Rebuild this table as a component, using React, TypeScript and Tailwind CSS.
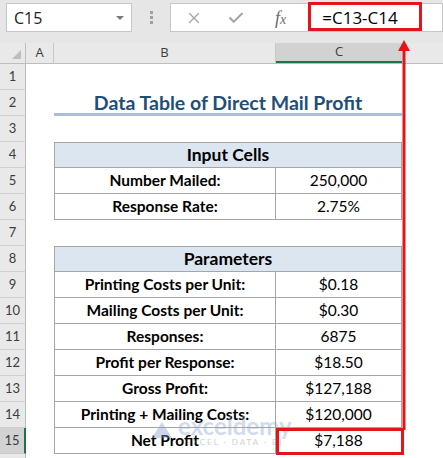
import { Check, X } from "lucide-react";

type Row = { n: number; kind: "blank" | "title" | "head" | "data"; label?: string; value?: string };

const rows: Row[] = [
  { n: 1, kind: "blank" },
  { n: 2, kind: "title", label: "Data Table of Direct Mail Profit" },
  { n: 3, kind: "blank" },
  { n: 4, kind: "head", label: "Input Cells" },
  { n: 5, kind: "data", label: "Number Mailed:", value: "250,000" },
  { n: 6, kind: "data", label: "Response Rate:", value: "2.75%" },
  { n: 7, kind: "blank" },
  { n: 8, kind: "head", label: "Parameters" },
  { n: 9, kind: "data", label: "Printing Costs per Unit:", value: "$0.18" },
  { n: 10, kind: "data", label: "Mailing Costs per Unit:", value: "$0.30" },
  { n: 11, kind: "data", label: "Responses:", value: "6875" },
  { n: 12, kind: "data", label: "Profit per Response:", value: "$18.50" },
  { n: 13, kind: "data", label: "Gross Profit:", value: "$127,188" },
  { n: 14, kind: "data", label: "Printing + Mailing Costs:", value: "$120,000" },
  { n: 15, kind: "data", label: "Net Profit", value: "$7,188" },
];

function RowHeader({ n }: { n: number }) {
  const active = n === 15;
  return (
    <div
      className={
        active
          ? "w-[26px] shrink-0 flex items-center justify-center bg-[#d2d2d2] border-b border-[#c8c8c8] border-r-2 border-r-[#217346] text-[13px] text-[#3c3c3c]"
          : "w-[26px] shrink-0 flex items-center justify-center bg-[#e9e9e9] border-b border-[#d0d0d0] border-r border-r-[#bdbdbd] text-[13px] text-[#3c3c3c]"
      }
    >
      {n}
    </div>
  );
}

function SheetRow({ row }: { row: Row }) {
  return (
    <div className="flex h-[26px]">
      <RowHeader n={row.n} />
      <div className="w-[28px] shrink-0" />
      {row.kind === "title" && (
        <div className="w-[348px] shrink-0 flex items-center justify-center border-b-[3px] border-[#a9bfd9] text-[19.5px] font-bold text-[#1f4e79] pt-[2px]">
          {row.label}
        </div>
      )}
      {row.kind === "head" && (
        <div className="w-[348px] shrink-0 flex items-center justify-center border border-[#a6a6a6] bg-[#dce6f1] text-[17.5px] font-bold text-black">
          {row.label}
        </div>
      )}
      {row.kind === "data" && (
        <>
          <div className="w-[222px] shrink-0 flex items-center justify-center border-l border-b border-r border-[#a6a6a6] text-[15.5px] font-bold text-black">
            {row.label}
          </div>
          <div className="w-[126px] shrink-0 flex items-center justify-center border-b border-r border-[#a6a6a6] text-[15.5px] text-black">
            {row.value}
          </div>
        </>
      )}
    </div>
  );
}

export default function App() {
  return (
    <div className="relative w-[443px] h-[458px] overflow-hidden bg-white font-['Lato','Open_Sans',sans-serif]">
      {/* toolbar */}
      <div className="h-[43px] bg-[#e6e6e6] flex items-start pt-[3px] pl-[6px]">
        <div className="w-[126px] h-[29px] bg-white border border-[#c6c6c6] flex items-center justify-between pl-[7px] pr-[7px]">
          <span className="text-[16px] text-[#222] font-['Open_Sans',sans-serif]">C15</span>
          <span className="w-0 h-0 border-l-[4px] border-r-[4px] border-t-[4px] border-l-transparent border-r-transparent border-t-[#7a7a7a]" />
        </div>
        <div className="w-[38px] h-[29px] flex flex-col items-center justify-center gap-[2px]">
          <span className="w-[3px] h-[3px] bg-[#a0a0a0]" />
          <span className="w-[3px] h-[3px] bg-[#a0a0a0]" />
          <span className="w-[3px] h-[3px] bg-[#a0a0a0]" />
        </div>
        <div className="flex-1 h-[29px] bg-white border border-[#c6c6c6] flex items-center">
          <X className="ml-[14px] w-[18px] h-[18px] text-[#a3a3a3]" strokeWidth={1.6} />
          <Check className="ml-[24px] w-[18px] h-[18px] text-[#a3a3a3]" strokeWidth={2.6} />
          <span className="ml-[30px] text-[18px] italic text-[#6b6b6b] font-['Liberation_Serif',serif] leading-none">
            f<span className="text-[14px]">x</span>
          </span>
          <span className="ml-[36px] text-[17px] text-black font-['Open_Sans',sans-serif]">=C13-C14</span>
        </div>
      </div>

      {/* column headers */}
      <div className="flex h-[21px] bg-[#e9e9e9] border-b border-[#bdbdbd] text-[13px] text-[#3c3c3c] font-['Open_Sans',sans-serif]">
        <div className="w-[26px] shrink-0 relative border-r border-[#bdbdbd]">
          <svg className="absolute right-[4px] bottom-[4px]" width="9" height="9" viewBox="0 0 9 9">
            <polygon points="9,0 9,9 0,9" fill="#bdbdbd" />
          </svg>
        </div>
        <div className="w-[28px] shrink-0 flex items-center justify-center border-r border-[#c8c8c8]">A</div>
        <div className="w-[222px] shrink-0 flex items-center justify-center border-r border-[#c8c8c8]">B</div>
        <div className="w-[126px] shrink-0 flex items-center justify-center bg-[#d2d2d2] border-b-2 border-[#217346]">C</div>
        <div className="flex-1" />
      </div>

      {rows.map((r) => (
        <SheetRow key={r.n} row={r} />
      ))}
      <div className="flex h-[10px]">
        <div className="w-[26px] bg-[#e9e9e9] border-r border-[#bdbdbd]" />
      </div>

      {/* watermark */}
      <div className="absolute left-[150px] top-[414px] flex items-center gap-[4px] opacity-40 pointer-events-none">
        <svg width="24" height="20" viewBox="0 0 24 20">
          <polygon points="2,18 12,2 22,18" fill="#7f9cc7" />
        </svg>
        <div className="flex flex-col items-center leading-none">
          <span className="text-[24px] font-bold text-[#8da8cf]">exceldemy</span>
          <span className="text-[8px] tracking-[2px] text-[#8a8a8a]">EXCEL · DATA · BI</span>
        </div>
      </div>

      {/* annotations */}
      <div className="absolute left-[308px] top-[2px] w-[114px] h-[29px] border-[3px] border-[#e3151b]" />
      <svg className="absolute left-[396px] top-[40px]" width="16" height="390" viewBox="0 0 16 390">
        <polygon points="8,0 2,11 14,11" fill="#e3151b" />
        <rect x="6.5" y="10" width="3" height="380" fill="#e3151b" />
      </svg>
      <div className="absolute left-[276px] top-[428px] w-[128px] h-[27px] border-[3px] border-[#e3151b]" />
    </div>
  );
}
